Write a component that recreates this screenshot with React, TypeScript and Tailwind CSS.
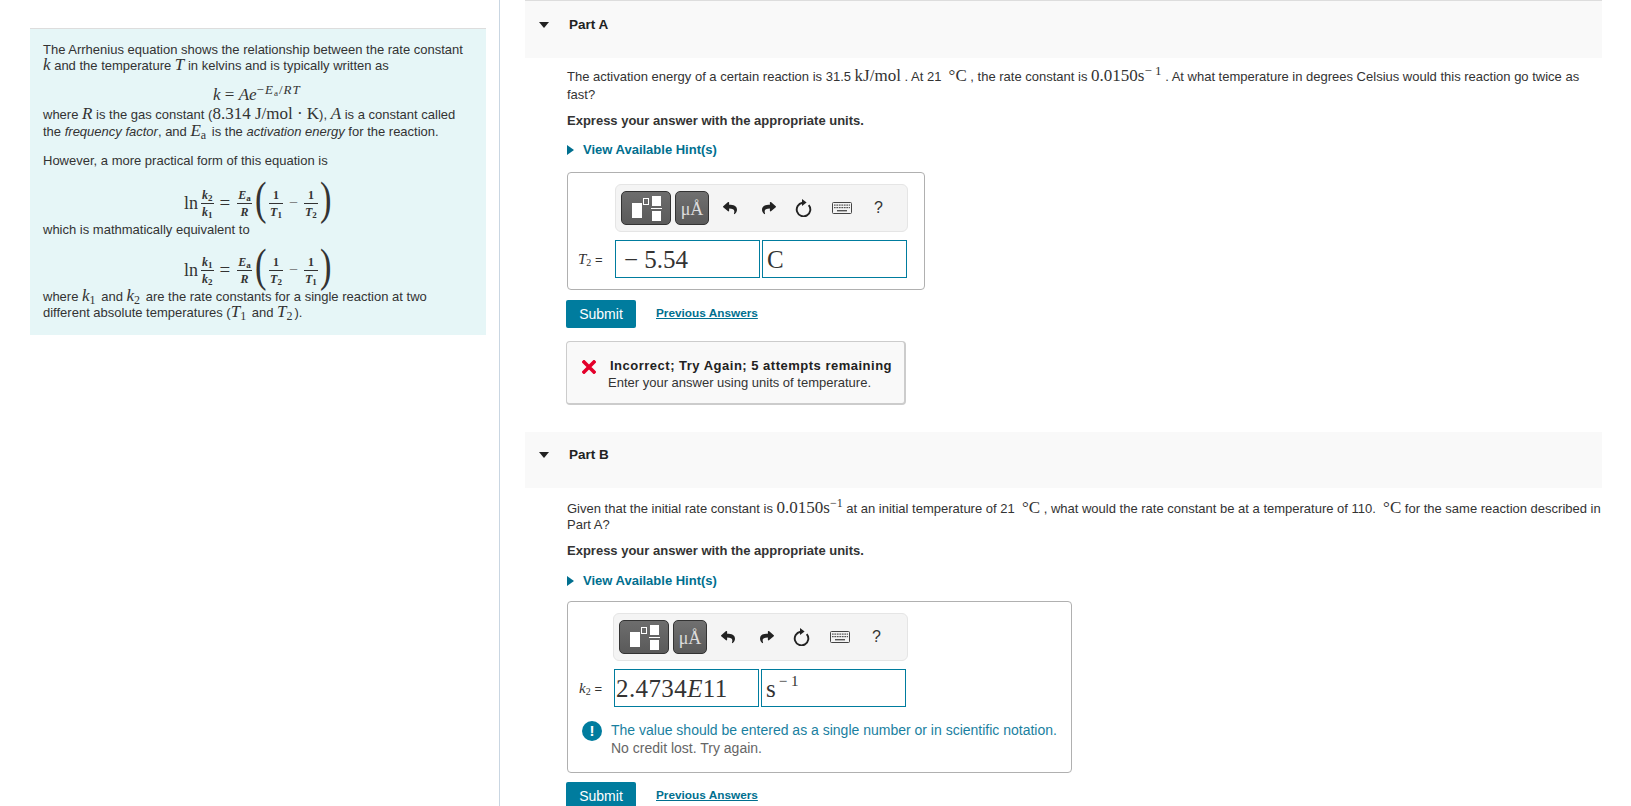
import React from "react";
import { FaReply, FaShare } from "react-icons/fa";

const serif = "[font-family:'Liberation_Serif',serif]";

function V({ children }: { children: React.ReactNode }) {
  return <span className="[font-family:'Liberation_Serif',serif] italic text-[17px] leading-[10px] font-medium">{children}</span>;
}
function N({ children }: { children: React.ReactNode }) {
  return <span className="[font-family:'Liberation_Serif',serif] text-[17px] leading-[10px]">{children}</span>;
}
function Sub({ children }: { children: React.ReactNode }) {
  return <sub className="text-[12px] not-italic [font-family:'Liberation_Serif',serif] mr-[2px]">{children}</sub>;
}
function Frac({ top, bottom }: { top: React.ReactNode; bottom: React.ReactNode }) {
  return (
    <span className="inline-flex flex-col items-center [font-family:'Liberation_Serif',serif] italic font-semibold text-[12px] leading-[14px]">
      <span className="px-[1px] pb-[1px] border-b border-[#333] w-full text-center">{top}</span>
      <span className="px-[1px] pt-[1px]">{bottom}</span>
    </span>
  );
}
const s = (t: string) => <sub className="text-[9px] not-italic">{t}</sub>;

function Equation({ a, b, c, d }: { a: React.ReactNode; b: React.ReactNode; c: React.ReactNode; d: React.ReactNode }) {
  return (
    <div className="flex items-center h-[40px] pl-[141px] [font-family:'Liberation_Serif',serif] text-[#333]">
      <span className="text-[18px] mr-[3px]">ln</span>
      <Frac top={a} bottom={b} />
      <span className="text-[19px] mx-[6px]">=</span>
      <span className="ml-[1px] flex"><Frac top={<>E{s("a")}</>} bottom="R" /></span>
      <span className="text-[46px] leading-[40px] font-light mt-[-8px] scale-x-75 ml-[1px] mr-[1px]">(</span>
      <Frac top={<span className="not-italic">1</span>} bottom={c} />
      <span className="text-[16px] mx-[6px] text-[#777]">−</span>
      <Frac top={<span className="not-italic">1</span>} bottom={d} />
      <span className="text-[46px] leading-[40px] font-light mt-[-8px] scale-x-75 ml-[0px]">)</span>
    </div>
  );
}

function Triangle() {
  return <span className="w-0 h-0 border-x-[5px] border-x-transparent border-t-[6px] border-t-[#222]" />;
}

function Header({ title, className }: { title: string; className: string }) {
  return (
    <div className={`bg-[#f9f9f9] flex items-start ${className}`}>
      <span className="ml-[14px] mt-[5px] flex"><Triangle /></span>
      <span className="ml-[20px] font-bold text-[13.5px] leading-[16px] text-[#222]">{title}</span>
    </div>
  );
}

function HintLink() {
  return (
    <div className="flex items-center h-[16px] font-bold text-[#006f8f] text-[13px]">
      <span className="w-0 h-0 border-y-[5px] border-y-transparent border-l-[7px] border-l-[#006f8f]" />
      <span className="ml-[9px]">View Available Hint(s)</span>
    </div>
  );
}

function Keyboard() {
  return (
    <svg width="20" height="12" viewBox="0 0 20 12">
      <rect x="0.5" y="0.5" width="19" height="11" rx="1" fill="#f4f4f4" stroke="#444" />
      <g fill="#555">
        <rect x="2" y="2.5" width="16" height="1.2" />
        <rect x="2" y="5" width="16" height="1.2" />
        <rect x="5" y="8" width="10" height="1.4" />
      </g>
      <g stroke="#f4f4f4" strokeWidth="0.7">
        <path d="M4 2v5M6.5 2v5M9 2v5M11.5 2v5M14 2v5M16.5 2v5" />
      </g>
    </svg>
  );
}

function Reset() {
  return (
    <svg width="17" height="18" viewBox="0 0 17 18" fill="none">
      <path d="M13.7 6.1A6.8 6.8 0 1 1 7.5 3.8" stroke="#222" strokeWidth="1.9" />
      <path d="M7 0 L11.6 3.5 L7 7 Z" fill="#222" />
    </svg>
  );
}

function Toolbar({ ml, w }: { ml: string; w: string }) {
  return (
    <div className={`${ml} ${w} h-[48px] bg-[#f4f4f4] border border-[#e5e5e5] rounded-[6px] flex items-center pl-[5px] relative`}>
      <div className="w-[50px] h-[34px] rounded-[5px] border border-[#333] bg-gradient-to-b from-[#6d6d6d] to-[#5a5a5a] relative shrink-0 flex items-center justify-center gap-[3px]">
        <div className="flex items-end gap-[2px]">
          <div className="w-[10px] h-[15px] bg-white" />
          <div className="w-[6px] h-[7px] border border-white mb-[13px] ml-[-1px]" />
        </div>
        <div className="flex flex-col gap-[2px] w-[9px] items-center">
          <div className="w-[9px] h-[10px] bg-white" />
          <div className="w-[11px] h-[1px] bg-white" />
          <div className="w-[9px] h-[10px] bg-white" />
        </div>
      </div>
      <div className="ml-[4px] w-[34px] h-[34px] rounded-[5px] border border-[#333] bg-gradient-to-b from-[#707070] to-[#5a5a5a] flex items-center justify-center [font-family:'Liberation_Serif',serif] text-[#dcdcdc] text-[18px] shrink-0 pt-[3px]">
        μÅ
      </div>
      <FaReply className="ml-[14px] text-[#222] w-[14px] h-[14px] shrink-0" />
      <FaShare className="ml-[25px] text-[#222] w-[14px] h-[14px] shrink-0" />
      <span className="ml-[19px] flex shrink-0"><Reset /></span>
      <span className="ml-[20px] flex shrink-0"><Keyboard /></span>
      <span className="ml-[22px] text-[16px] text-[#333] shrink-0">?</span>
    </div>
  );
}

function AnswerBox({ children, className = "" }: { children: React.ReactNode; className?: string }) {
  return (
    <div className={`w-[145px] h-[38px] border border-[#007c9e] flex items-center [font-family:'Liberation_Serif',serif] text-[25px] text-[#333] leading-none ${className}`}>
      {children}
    </div>
  );
}

function SubmitRow() {
  return (
    <div className="flex items-center">
      <button className="w-[70px] h-[28px] bg-[#007c9e] rounded-[2px] text-white text-[14px] leading-[28px]">Submit</button>
      <a className="ml-[20px] font-bold text-[11.8px] text-[#006f8f] underline mt-[-1px]">Previous Answers</a>
    </div>
  );
}

export default function App() {
  return (
    <div className="h-[806px] w-[1631px] overflow-hidden flex bg-white text-[#333] text-[12.5px] [font-family:'Liberation_Sans',Arial,sans-serif]">
      <aside className="w-[500px] h-full border-r border-[#c9d6e2] pt-[28px] pl-[30px] shrink-0">
        <div className="w-[456px] h-[307px] bg-[#e6f6f7] border-t border-[#dddddd] pt-[13px] pl-[13px] pr-[8px] leading-[16px]">
          <p className="text-[13px] whitespace-nowrap">The Arrhenius equation shows the relationship between the rate constant</p>
          <p className="text-[13px] whitespace-nowrap"><V>k</V> and the temperature <V>T</V> in kelvins and is typically written as</p>
          <div className="h-[33px] pt-[12px] pl-[170px] whitespace-nowrap leading-[18px] [font-family:'Liberation_Serif',serif] text-[17px]">
            <i className="font-medium">k</i> = <i className="font-medium">Ae</i>
            <sup className="text-[13px] tracking-[1px]">
              −<i>E</i><sub className="text-[9px]">a</sub>/<i>RT</i>
            </sup>
          </div>
          <p className="text-[13px] whitespace-nowrap mt-[0px] leading-[16px]">
            where <V>R</V> is the gas constant (<N>8.314 J/mol · K</N>), <V>A</V> is a constant called
          </p>
          <p className="text-[13px] whitespace-nowrap mt-[1px] leading-[16px]">
            the <em>frequency factor</em>, and <V>E</V><Sub>a</Sub> is the <em>activation energy</em> for the reaction.
          </p>
          <p className="text-[13px] mt-[13px]">However, a more practical form of this equation is</p>
          <div className="mt-[14px]">
            <Equation a={<>k{s("2")}</>} b={<>k{s("1")}</>} c={<>T{s("1")}</>} d={<>T{s("2")}</>} />
          </div>
          <p className="text-[13px] whitespace-nowrap mt-[-1px]">which is mathmatically equivalent to</p>
          <div className="mt-[12px]">
            <Equation a={<>k{s("1")}</>} b={<>k{s("2")}</>} c={<>T{s("2")}</>} d={<>T{s("1")}</>} />
          </div>
          <p className="text-[13px] whitespace-nowrap mt-[-1px]">
            where <V>k</V><Sub>1</Sub> and <V>k</V><Sub>2</Sub> are the rate constants for a single reaction at two
          </p>
          <p className="text-[13px] whitespace-nowrap">
            different absolute temperatures (<V>T</V><Sub>1</Sub> and <V>T</V><Sub>2</Sub>).
          </p>
        </div>
      </aside>

      <main className="ml-[25px] w-[1077px] shrink-0 text-[13px]">
        <Header title="Part A" className="h-[58px] pt-[16px] border-t border-[#dddddd]" />
        <div className="pl-[42px]">
          <p className="mt-[10px] leading-[18px] w-[1020px]">
            The activation energy of a certain reaction is 31.5 <N>kJ/mol</N> . At 21 &nbsp;<N>°C</N> , the rate constant is <N>0.0150s</N><sup className={`${serif} text-[13px] leading-none`}>− 1</sup> . At what temperature in degrees Celsius would this reaction go twice as fast?
          </p>
          <p className="mt-[9px] leading-[16px] font-bold text-[#333]">Express your answer with the appropriate units.</p>
          <div className="mt-[13px]"><HintLink /></div>

          <div className="mt-[14px] w-[358px] h-[118px] border border-[#b0b0b0] rounded-[4px] pt-[11px]">
            <Toolbar ml="ml-[47px]" w="w-[293px]" />
            <div className="flex items-center mt-[8px]">
              <span className="ml-[10px] w-[37px] [font-family:'Liberation_Serif',serif] text-[15px] whitespace-nowrap">
                <i>T</i><sub className="text-[10px]">2</sub> <span className="[font-family:'Liberation_Sans',sans-serif] text-[13px]">=</span>
              </span>
              <AnswerBox className="pl-[8px]">− 5.54</AnswerBox>
              <AnswerBox className="ml-[2px] pl-[4px]">C</AnswerBox>
            </div>
          </div>

          <div className="mt-[10px] ml-[-1px]"><SubmitRow /></div>

          <div className="mt-[13px] ml-[-1px] w-[340px] h-[64px] bg-[#f9f9f9] border border-[#ccc] border-r-[2px] border-b-[2px] rounded-[4px] flex pl-[15px] pt-[15px]">
            <svg width="14" height="14" viewBox="0 0 14 14" className="mt-[3px] shrink-0">
              <path d="M2 2 L12 12 M12 2 L2 12" stroke="#e4002b" strokeWidth="3.6" strokeLinecap="square" />
            </svg>
            <div className="ml-[14px] whitespace-nowrap">
              <div className="font-bold text-[13px] leading-[18px] tracking-[0.5px] text-[#222]">Incorrect; Try Again; 5 attempts remaining</div>
              <div className="text-[13px] leading-[16px] ml-[-2px] text-[#333]">Enter your answer using units of temperature.</div>
            </div>
          </div>
        </div>

        <Header title="Part B" className="mt-[27px] h-[56px] pt-[15px]" />
        <div className="pl-[42px]">
          <p className="mt-[13px] leading-[16px] whitespace-nowrap">
            Given that the initial rate constant is <N>0.0150s</N><sup className={`${serif} text-[12px] leading-none`}>−1</sup> at an initial temperature of 21 &nbsp;<N>°C</N> , what would the rate constant be at a temperature of 110. &nbsp;<N>°C</N> for the same reaction described in<br />Part A?
          </p>
          <p className="mt-[10px] leading-[16px] font-bold">Express your answer with the appropriate units.</p>
          <div className="mt-[14px]"><HintLink /></div>

          <div className="mt-[12px] w-[505px] h-[172px] border border-[#b0b0b0] rounded-[4px] pt-[11px]">
            <Toolbar ml="ml-[45px]" w="w-[295px]" />
            <div className="flex items-center mt-[8px]">
              <span className="ml-[11px] w-[35px] [font-family:'Liberation_Serif',serif] text-[15px] whitespace-nowrap">
                <i>k</i><sub className="text-[10px]">2</sub> <span className="[font-family:'Liberation_Sans',sans-serif] text-[13px]">=</span>
              </span>
              <AnswerBox className="pl-[1px] tracking-[0.4px]">2.4734<i>E</i>11</AnswerBox>
              <AnswerBox className="ml-[2px] pl-[4px] w-[144px]">
                <span>s</span><span className="text-[15px] ml-[3px] mt-[-14px]">− 1</span>
              </AnswerBox>
            </div>
            <div className="flex mt-[14px] ml-[14px]">
              <span className="w-[20px] h-[20px] rounded-full bg-[#007c9e] text-white font-bold text-[15px] leading-[20px] text-center shrink-0">!</span>
              <div className="ml-[9px] text-[14px] leading-[18px]">
                <div className="text-[#1a7f9f] whitespace-nowrap">The value should be entered as a single number or in scientific notation.</div>
                <div className="text-[#666]">No credit lost. Try again.</div>
              </div>
            </div>
          </div>

          <div className="mt-[9px] ml-[-1px]"><SubmitRow /></div>
        </div>
      </main>
    </div>
  );
}
